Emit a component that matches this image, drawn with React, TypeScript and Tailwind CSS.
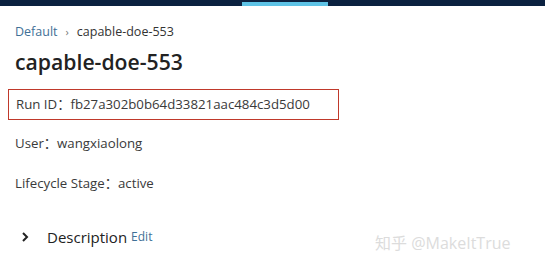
export default function App() {
  return (
    <div className="relative w-[545px] h-[266px] bg-white overflow-hidden" style={{ fontFamily: '"Open Sans", "Noto Sans CJK SC", sans-serif' }}>
      {/* top nav strip */}
      <div className="h-[6px] bg-[#0b2140] flex items-end">
        <div className="ml-[242px] w-[86px] h-[4px] bg-[#5ec3e6]" />
      </div>

      <div className="px-[15px]">
        <div className="mt-[19px] flex items-center text-[12.5px] leading-[14px] text-[#333]">
          <span className="text-[#3f7097]">Default</span>
          <span className="mx-[8px] text-[#777] text-[11px]">›</span>
          <span>capable-doe-553</span>
        </div>
        <h1 className="mt-[9px] text-[21.2px] leading-[28px] font-semibold text-[#222]">capable-doe-553</h1>

        <div className="mt-[13px] -ml-[7px] w-[331px] h-[31px] border border-[#c0392b] flex items-center pl-[7px] pt-[1px] text-[13.25px] text-[#3a3a3a]">
          Run ID：fb27a302b0b64d33821aac484c3d5d00
        </div>

        <div className="mt-[14px] text-[13.25px] leading-[18px] text-[#3a3a3a]">User：wangxiaolong</div>
        <div className="mt-[22px] text-[13.25px] leading-[18px] text-[#3a3a3a]">Lifecycle Stage：active</div>

        <div className="mt-[34px] flex items-center">
          <svg width="10" height="12" viewBox="0 0 10 12" className="ml-[5px]">
            <path d="M3 2 L7 6 L3 10" fill="none" stroke="#222" strokeWidth="2" />
          </svg>
          <span className="ml-[17px] text-[15px] text-[#222]">Description</span>
          <span className="ml-[4px] text-[12px] text-[#3f7097]">Edit</span>
        </div>
      </div>

      <div className="absolute left-[375px] top-[231px] text-[16px] text-[#dcdcdc]">知乎 @MakeItTrue</div>
    </div>
  );
}
